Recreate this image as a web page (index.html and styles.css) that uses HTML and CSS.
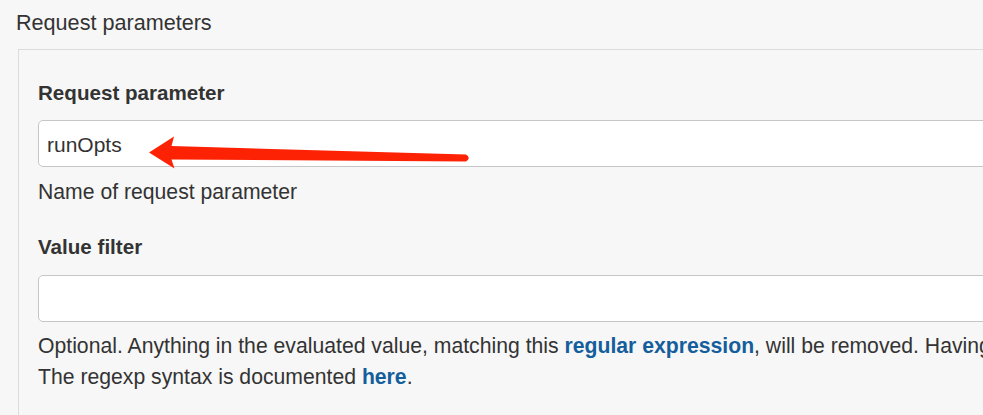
FILE: index.html
```html
<!DOCTYPE html>
<html lang="en">

<head>
    <meta charset="UTF-8">
    <meta name="viewport" content="width=device-width, initial-scale=1.0">
    <title>Request parameters</title>
    <link rel="stylesheet" href="styles.css">
</head>

<body>

    <div class="section-title">Request parameters</div>
    <div class="panel">
        <div class="form-group">
            <label for="param">Request parameter</label>
            <input type="text" id="param" value="runOpts">
            <div class="help">Name of request parameter</div>
        </div>
        <div class="form-group filter-group">
            <label for="filter">Value filter</label>
            <input type="text" id="filter">
            <div class="help multi">
                Optional. Anything in the evaluated value, matching this <a href="#">regular expression</a>, will be removed. Having<br>
                The regexp syntax is documented <a href="#">here</a>.
            </div>
        </div>
    </div>

    <!-- annotation arrow drawn over the screenshot -->
    <svg class="arrow" width="983" height="415" viewBox="0 0 983 415">
        <path d="M149,152.5 L174,136.5 L171.5,146 L466,154.5 Q471.5,158 466,161.5 L171.5,159.5 L174.5,168.5 Z" fill="#fe2205"/>
    </svg>

</body>

</html>
```

FILE: styles.css
```css
* {
    margin: 0;
    padding: 0;
    box-sizing: border-box;
}

body {
    position: relative;
    display: flex;
    flex-direction: column;
    height: 100vh;
    overflow: hidden;
    background: #f7f7f7;
    color: #333;
    font-family: "Liberation Sans", Arial, sans-serif;
    font-size: 21.2px;
    line-height: 30px;
}

.section-title {
    margin-top: 8px;
    padding-left: 16px;
    font-size: 21.6px;
}

.panel {
    flex: 1;
    margin-top: 11px;
    margin-left: 18px;
    overflow: hidden;
    border-top: 1px solid #dcdcdc;
    border-left: 1px solid #dcdcdc;
    padding: 28px 0 0 19px;
}

.form-group label {
    display: block;
    font-weight: bold;
    font-size: 20.6px;
    margin-bottom: 12px;
}

.form-group input {
    display: block;
    width: calc(100% + 20px);
    height: 47px;
    padding: 2px 8px 0;
    border: 1px solid #c6c6c6;
    border-radius: 5px;
    background: #fff;
    color: #333;
    font-family: "Liberation Sans", Arial, sans-serif;
    font-size: 21px;
    outline: none;
}

.help {
    margin-top: 10px;
}

.filter-group {
    margin-top: 25px;
}

.filter-group label {
    margin-bottom: 13px;
}

.help.multi {
    margin-top: 8px;
    line-height: 31px;
    white-space: nowrap;
}

.help a {
    color: #145e9c;
    font-weight: bold;
    text-decoration: none;
}

.arrow {
    position: absolute;
    left: 0;
    top: 0;
}
```
